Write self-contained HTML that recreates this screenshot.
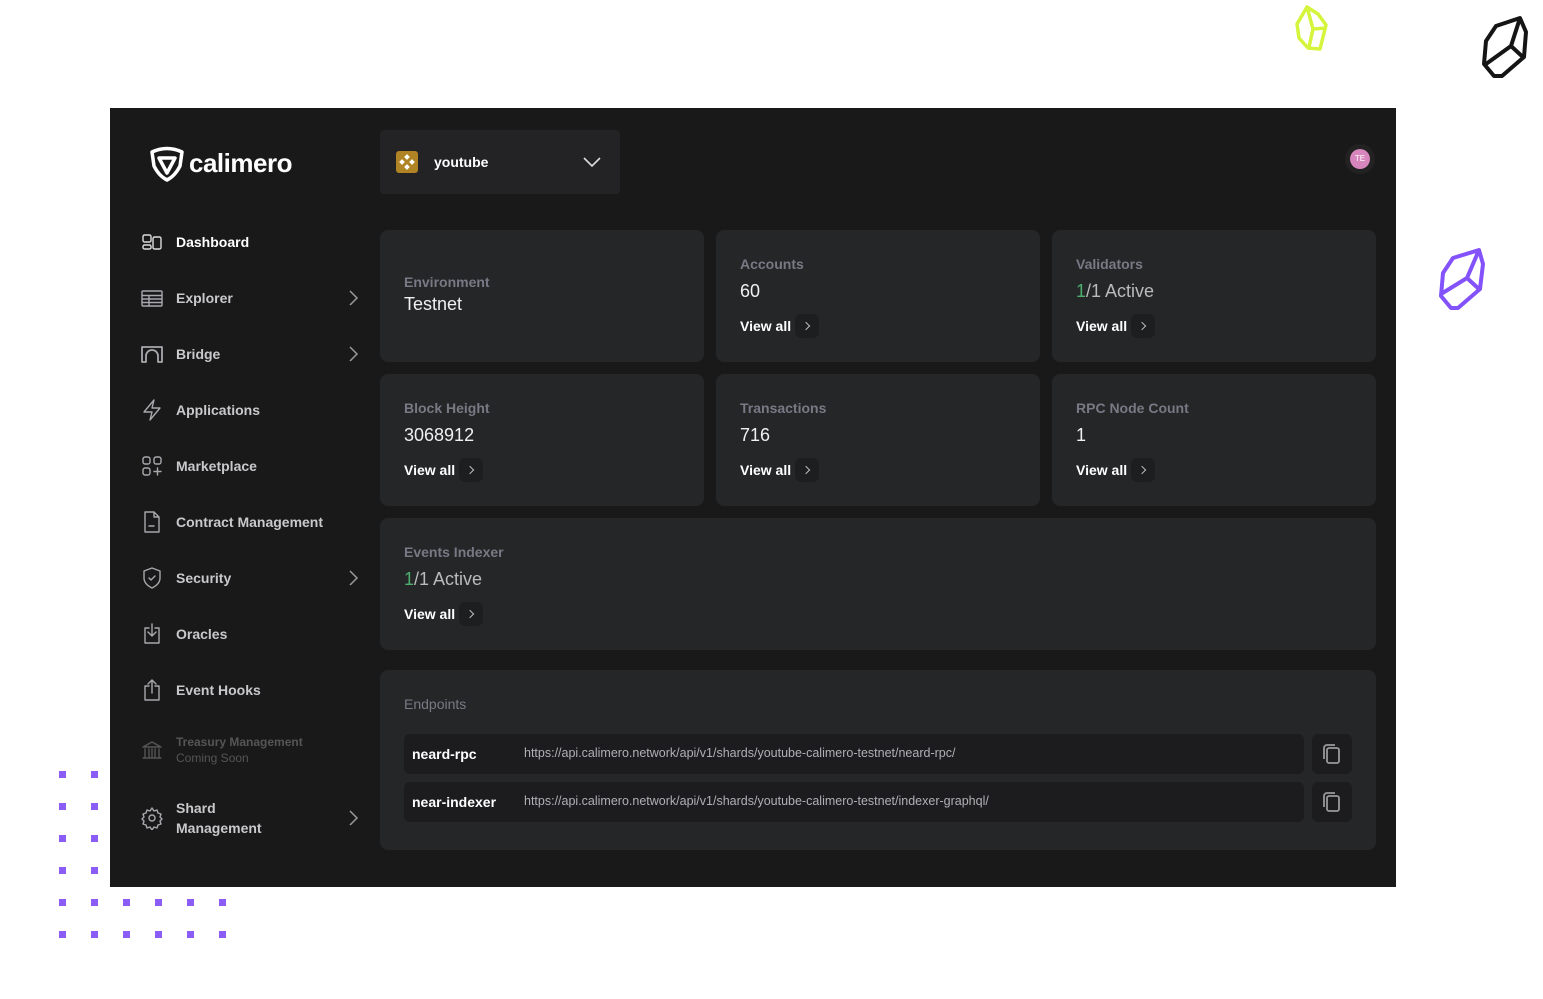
<!DOCTYPE html>
<html><head><meta charset="utf-8"><style>
*{box-sizing:border-box;margin:0;padding:0}
body{width:1543px;height:999px;background:#fff;position:relative;overflow:hidden;font-family:"Liberation Sans",sans-serif}
.panel{position:absolute;left:110px;top:108px;width:1286px;height:779px;background:#19191a}
.abs{position:absolute}
.nav{position:absolute;left:30px;height:24px;display:flex;align-items:center;color:#c9c9cc;font-size:14px;font-weight:bold}
.nav svg{width:24px;height:24px;margin-right:12px;fill:none;stroke:#a8a8ad;stroke-width:1.4;stroke-linecap:round;stroke-linejoin:round}
.chev{position:absolute;left:236px;width:14px;height:24px}
.card{position:absolute;background:#252628;border-radius:8px}
.lbl{position:absolute;left:24px;font-size:14px;font-weight:bold;color:#777a85}
.val{position:absolute;left:24px;font-size:18px;color:#f0f0f0}
.va{position:absolute;left:24px;font-size:14px;font-weight:bold;color:#fff;display:flex;align-items:center}
.va span{display:inline-block;width:24px;height:24px;background:#1d1e20;border-radius:6px;margin-left:4px;position:relative}
.va span:after{content:"";position:absolute;left:8px;top:9px;width:5px;height:5px;border-right:1.5px solid #bbb;border-top:1.5px solid #bbb;transform:rotate(45deg)}
.dot{position:absolute;width:7px;height:7px;background:#8b5cf6}
.ep{position:absolute;left:24px;width:900px;height:40px;background:#1c1c1e;border-radius:6px}
.ep b{position:absolute;left:8px;top:12px;color:#fff;font-size:14px}
.ep i{position:absolute;left:120px;top:12px;color:#b0b0b5;font-size:12.5px;font-style:normal}
.cp{position:absolute;left:932px;width:40px;height:40px;background:#1c1c1e;border-radius:6px}
</style></head><body>
<svg class="abs" style="left:1293px;top:4px" width="42" height="50" viewBox="0 0 42 50" fill="none" stroke="#d4f53c" stroke-width="3.5" stroke-linejoin="round"><path d="M14 3L25 10L33 21L27 45L15 44L6 34L4 20ZM14 3L20 25L33 24M20 25L16 43"/></svg>
<svg class="abs" style="left:1478px;top:14px" width="55" height="66" viewBox="0 0 55 66" fill="none" stroke="#151515" stroke-width="4" stroke-linejoin="round"><path d="M42 4L48 18L46 43L24 62L16 62L6 50L8 27L18 12ZM42 4L33 32L46 44M33 32L8 50"/></svg>
<svg class="abs" style="left:1435px;top:246px" width="55" height="66" viewBox="0 0 55 66" fill="none" stroke="#8352fb" stroke-width="4" stroke-linejoin="round"><path d="M44 4L48 18L45 43L23 62L16 62L6 50L8 27L18 12ZM44 4L32 32L45 44M32 32L6 48"/></svg>

<div class="dot" style="left:59px;top:771px"></div><div class="dot" style="left:91px;top:771px"></div>
<div class="dot" style="left:59px;top:803px"></div><div class="dot" style="left:91px;top:803px"></div>
<div class="dot" style="left:59px;top:835px"></div><div class="dot" style="left:91px;top:835px"></div>
<div class="dot" style="left:59px;top:867px"></div><div class="dot" style="left:91px;top:867px"></div>
<div class="dot" style="left:59px;top:899px"></div><div class="dot" style="left:91px;top:899px"></div><div class="dot" style="left:123px;top:899px"></div><div class="dot" style="left:155px;top:899px"></div><div class="dot" style="left:187px;top:899px"></div><div class="dot" style="left:219px;top:899px"></div>
<div class="dot" style="left:59px;top:931px"></div><div class="dot" style="left:91px;top:931px"></div><div class="dot" style="left:123px;top:931px"></div><div class="dot" style="left:155px;top:931px"></div><div class="dot" style="left:187px;top:931px"></div><div class="dot" style="left:219px;top:931px"></div>

<div class="panel">
 <svg class="abs" style="left:39px;top:38px" width="36" height="36" viewBox="0 0 36 36" fill="none" stroke="#fff" stroke-width="3.5" stroke-linejoin="round"><path d="M3 6Q18 -1 33 6L31 20Q26 30 18 34Q10 30 5 20Z"/><path d="M10 12L18 27L26 12Z"/></svg>
 <div class="abs" style="left:79px;top:40px;color:#fff;font-size:26px;font-weight:bold;letter-spacing:-0.5px">calimero</div>

 <div class="nav" style="top:122px;color:#fff"><svg viewBox="0 0 24 24" style="stroke:#ddd"><rect x="3" y="5" width="8" height="7" rx="1.5"/><rect x="3" y="15" width="8" height="4" rx="1.5"/><rect x="13" y="7" width="8" height="12" rx="1.5"/></svg>Dashboard</div>
 <div class="nav" style="top:178px"><svg viewBox="0 0 24 24"><rect x="2" y="5" width="20" height="15" rx="1"/><path d="M2 9.5h20M2 13h20M2 16.5h20M9 9.5v10.5"/></svg>Explorer</div>
 <div class="nav" style="top:234px"><svg viewBox="0 0 24 24" style="stroke-width:1.8"><path d="M2 20V5h20v15h-4v-6a6 6 0 0 0-12 0v6z"/></svg>Bridge</div>
 <div class="nav" style="top:290px"><svg viewBox="0 0 24 24"><path d="M14 2L4 14h8l-2 8 10-12h-8z"/></svg>Applications</div>
 <div class="nav" style="top:346px"><svg viewBox="0 0 24 24"><rect x="3" y="3" width="7" height="7" rx="2"/><rect x="14" y="3" width="7" height="7" rx="2"/><rect x="3" y="14" width="7" height="7" rx="2"/><path d="M17.5 14v7M14 17.5h7"/></svg>Marketplace</div>
 <div class="nav" style="top:402px"><svg viewBox="0 0 24 24"><path d="M5 2h9l5 5v15H5z M14 2v5h5M9 16h5"/></svg>Contract Management</div>
 <div class="nav" style="top:458px"><svg viewBox="0 0 24 24"><path d="M12 2l8 3v7c0 5-4 8-8 10-4-2-8-5-8-10V5z M9 12l2 2 4-4"/></svg>Security</div>
 <div class="nav" style="top:514px"><svg viewBox="0 0 24 24"><path d="M9 6H5v15h14V6h-4M12 2v12M8 10l4 4 4-4"/></svg>Oracles</div>
 <div class="nav" style="top:570px"><svg viewBox="0 0 24 24"><path d="M9 8H5v14h14V8h-4M12 15V2M8 6l4-4 4 4"/></svg>Event Hooks</div>
 <div class="nav" style="top:626px;height:32px;color:#555"><svg viewBox="0 0 24 24" style="stroke:#555"><path d="M3 9l9-5 9 5zM5 11v8M9 11v8M12 11v8M15 11v8M19 11v8M3 20h18"/></svg><div style="font-size:12px;line-height:16px;font-weight:bold">Treasury Management<br><span style="font-weight:normal">Coming Soon</span></div></div>
 <div class="nav" style="top:690px;height:40px"><svg viewBox="0 0 24 24"><circle cx="12" cy="12" r="3"/><path d="M12 2l2 3 3-1 1 3 3 1-1 3 2 2-2 2 1 3-3 1-1 3-3-1-2 3-2-3-3 1-1-3-3-1 1-3-2-2 2-2-1-3 3-1 1-3 3 1z"/></svg><div style="line-height:20px">Shard<br>Management</div></div>
 <svg class="chev" style="top:178px" viewBox="0 0 14 24" fill="none" stroke="#999" stroke-width="1.5"><path d="M4 5l7 7-7 7"/></svg>
 <svg class="chev" style="top:234px" viewBox="0 0 14 24" fill="none" stroke="#999" stroke-width="1.5"><path d="M4 5l7 7-7 7"/></svg>
 <svg class="chev" style="top:458px" viewBox="0 0 14 24" fill="none" stroke="#999" stroke-width="1.5"><path d="M4 5l7 7-7 7"/></svg>
 <svg class="chev" style="top:698px" viewBox="0 0 14 24" fill="none" stroke="#999" stroke-width="1.5"><path d="M4 5l7 7-7 7"/></svg>

 <div class="abs" style="left:270px;top:22px;width:240px;height:64px;background:#232325;border-radius:4px">
  <div class="abs" style="left:16px;top:21px;width:22px;height:22px;background:#b08324;border-radius:3px"><svg width="22" height="22" viewBox="0 0 22 22" fill="#fff"><rect x="9" y="4" width="4" height="4" transform="rotate(45 11 6)"/><rect x="9" y="14" width="4" height="4" transform="rotate(45 11 16)"/><rect x="4" y="9" width="4" height="4" transform="rotate(45 6 11)"/><rect x="14" y="9" width="4" height="4" transform="rotate(45 16 11)"/></svg></div>
  <div class="abs" style="left:54px;top:24px;color:#fff;font-size:14px;font-weight:bold">youtube</div>
  <svg class="abs" style="left:202px;top:24px" width="20" height="16" viewBox="0 0 20 16" fill="none" stroke="#ddd" stroke-width="1.6"><path d="M2 4l8 8 8-8"/></svg>
 </div>
 <div class="abs" style="left:1235px;top:36px;width:30px;height:30px;border-radius:50%;background:#222"><div style="margin:5px;width:20px;height:20px;border-radius:50%;background:#d685bd;color:#fff;font-size:8px;text-align:center;line-height:20px">TE</div></div>

 <div class="card" style="left:270px;top:122px;width:324px;height:132px"><div class="lbl" style="top:44px">Environment</div><div class="val" style="top:64px">Testnet</div></div>
 <div class="card" style="left:606px;top:122px;width:324px;height:132px"><div class="lbl" style="top:26px">Accounts</div><div class="val" style="top:51px">60</div><div class="va" style="top:84px">View all<span></span></div></div>
 <div class="card" style="left:942px;top:122px;width:324px;height:132px"><div class="lbl" style="top:26px">Validators</div><div class="val" style="top:51px;color:#bbb"><span style="color:#4caf6e">1</span>/1 Active</div><div class="va" style="top:84px">View all<span></span></div></div>
 <div class="card" style="left:270px;top:266px;width:324px;height:132px"><div class="lbl" style="top:26px">Block Height</div><div class="val" style="top:51px">3068912</div><div class="va" style="top:84px">View all<span></span></div></div>
 <div class="card" style="left:606px;top:266px;width:324px;height:132px"><div class="lbl" style="top:26px">Transactions</div><div class="val" style="top:51px">716</div><div class="va" style="top:84px">View all<span></span></div></div>
 <div class="card" style="left:942px;top:266px;width:324px;height:132px"><div class="lbl" style="top:26px">RPC Node Count</div><div class="val" style="top:51px">1</div><div class="va" style="top:84px">View all<span></span></div></div>
 <div class="card" style="left:270px;top:410px;width:996px;height:132px"><div class="lbl" style="top:26px">Events Indexer</div><div class="val" style="top:51px;color:#bbb"><span style="color:#4caf6e">1</span>/1 Active</div><div class="va" style="top:84px">View all<span></span></div></div>
 <div class="card" style="left:270px;top:562px;width:996px;height:180px">
  <div class="abs" style="left:24px;top:26px;color:#777a85;font-size:14px">Endpoints</div>
  <div class="ep" style="top:64px"><b>neard-rpc</b><i>https://api.calimero.network/api/v1/shards/youtube-calimero-testnet/neard-rpc/</i></div>
  <div class="cp" style="top:64px"><svg width="40" height="40" viewBox="0 0 40 40" fill="none" stroke="#999" stroke-width="1.8"><rect x="15" y="14" width="12" height="15" rx="2"/><path d="M12 25v-11a3 3 0 0 1 3-3h8"/></svg></div>
  <div class="ep" style="top:112px"><b>near-indexer</b><i>https://api.calimero.network/api/v1/shards/youtube-calimero-testnet/indexer-graphql/</i></div>
  <div class="cp" style="top:112px"><svg width="40" height="40" viewBox="0 0 40 40" fill="none" stroke="#999" stroke-width="1.8"><rect x="15" y="14" width="12" height="15" rx="2"/><path d="M12 25v-11a3 3 0 0 1 3-3h8"/></svg></div>
 </div>
</div>
</body></html>
